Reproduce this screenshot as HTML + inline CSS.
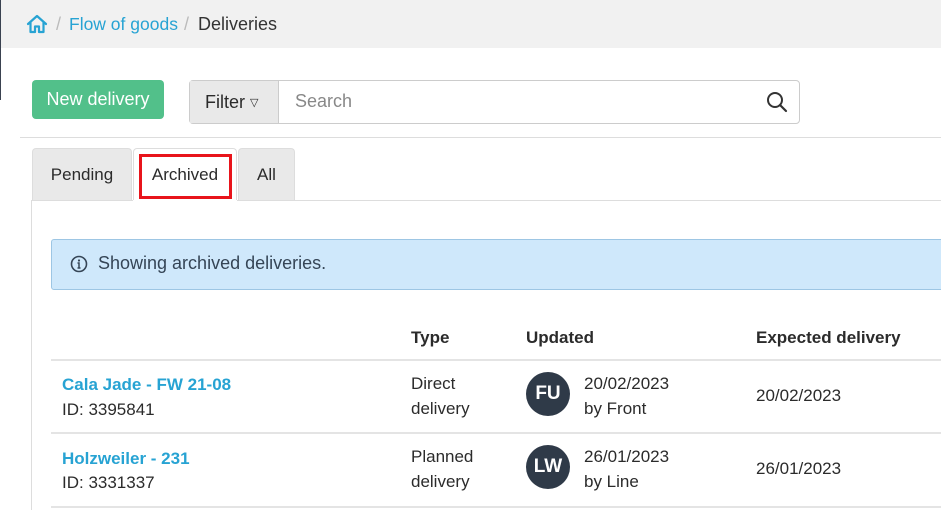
<!DOCTYPE html><html><head><style>
*{margin:0;padding:0;box-sizing:border-box}
body{width:941px;height:510px;overflow:hidden;background:#fff;font-family:"Liberation Sans",sans-serif;color:#2b2b2b;position:relative}
.a{position:absolute;white-space:nowrap}
.crumb{left:0;top:0;width:941px;height:48px;background:#f1f1f1}
.bl{color:#27a3d3}
.tab{position:absolute;top:148px;height:52px;background:#e9e9e9;border:1px solid #ddd;border-bottom:none;border-radius:4px 4px 0 0;font-size:17px;line-height:52px;text-align:center}
.av{position:absolute;width:44px;height:44px;border-radius:50%;background:#2f3a48;color:#fff;font-weight:bold;font-size:19px;line-height:44px;text-align:center}
.hl{position:absolute;left:51px;width:890px;height:2px;background:#e4e4e4}
.t{font-size:17px;line-height:25px}
</style></head><body>
<div class="a crumb"></div>
<div class="a" style="left:0;top:0;width:1px;height:100px;background:#3a4250"></div>
<svg class="a" style="left:26px;top:14px" width="22" height="20" viewBox="0 0 22 20"><path d="M2 10 L11 2 L20 10 M4.5 8 V18 H9 V12.5 H13 V18 H17.5 V8" fill="none" stroke="#27a3d3" stroke-width="2.2" stroke-linejoin="round" stroke-linecap="round"/></svg>
<div class="a" style="left:56px;top:14px;font-size:18px;color:#bbb">/</div>
<div class="a bl" style="left:69px;top:14px;font-size:17.5px">Flow of goods</div>
<div class="a" style="left:184px;top:14px;font-size:18px;color:#bbb">/</div>
<div class="a" style="left:198px;top:14px;font-size:18px;color:#333">Deliveries</div>
<div class="a" style="left:32px;top:80px;width:132px;height:39px;background:#52c08a;border-radius:4px;color:#fff;font-size:18px;line-height:39px;text-align:center">New delivery</div>
<div class="a" style="left:189px;top:80px;width:611px;height:44px;border:1px solid #ccc;border-radius:4px;background:#fff"></div>
<div class="a" style="left:190px;top:81px;width:89px;height:42px;background:#e9e9e9;border-right:1px solid #ccc;font-size:18px;line-height:42px;padding-left:15px">Filter <span style="font-size:11px;vertical-align:2px">▽</span></div>
<div class="a" style="left:295px;top:91px;font-size:18px;color:#888">Search</div>
<svg class="a" style="left:766px;top:91px" width="22" height="22" viewBox="0 0 22 22"><circle cx="9" cy="9" r="7" fill="none" stroke="#333" stroke-width="2"/><path d="M14 14 L20 20" stroke="#333" stroke-width="2.2" stroke-linecap="round"/></svg>
<div class="a" style="left:20px;top:137px;width:921px;height:1px;background:#ddd"></div>
<div class="tab" style="left:32px;width:100px">Pending</div>
<div class="tab" style="left:133px;width:104px;background:#fff;height:53px">Archived</div>
<div class="tab" style="left:238px;width:57px">All</div>
<div class="a" style="left:139px;top:154px;width:93px;height:45px;border:3px solid #e8141b"></div>
<div class="a" style="left:31px;top:200px;width:910px;height:1px;background:#ddd"></div>
<div class="a" style="left:133px;top:200px;width:104px;height:1px;background:#fff"></div>
<div class="a" style="left:31px;top:200px;width:1px;height:310px;background:#ddd"></div>
<div class="a" style="left:51px;top:239px;width:895px;height:51px;background:#cfe8fb;border:1px solid #9dc6e4;border-radius:3px"></div>
<svg class="a" style="left:70px;top:255px" width="18" height="18" viewBox="0 0 18 18"><circle cx="9" cy="9" r="7.5" fill="none" stroke="#354556" stroke-width="1.6"/><circle cx="9" cy="5.5" r="1.1" fill="#354556"/><path d="M7.5 8 H9 V13 M7.5 13 H10.5" stroke="#354556" stroke-width="1.5" fill="none"/></svg>
<div class="a" style="left:98px;top:253px;font-size:18px;color:#354556">Showing archived deliveries.</div>
<div class="a t" style="left:411px;top:325px;font-weight:bold">Type</div>
<div class="a t" style="left:526px;top:325px;font-weight:bold">Updated</div>
<div class="a t" style="left:756px;top:325px;font-weight:bold">Expected delivery</div>
<div class="hl" style="top:359px"></div>
<div class="hl" style="top:432px"></div>
<div class="hl" style="top:506px"></div>
<div class="a t bl" style="left:62px;top:372px;font-weight:bold">Cala Jade - FW 21-08</div>
<div class="a t" style="left:62px;top:397px">ID: 3395841</div>
<div class="a t" style="left:411px;top:371px">Direct<br>delivery</div>
<div class="av" style="left:526px;top:372px">FU</div>
<div class="a t" style="left:584px;top:371px">20/02/2023<br>by Front</div>
<div class="a t" style="left:756px;top:383px">20/02/2023</div>
<div class="a t bl" style="left:62px;top:446px;font-weight:bold">Holzweiler - 231</div>
<div class="a t" style="left:62px;top:470px">ID: 3331337</div>
<div class="a t" style="left:411px;top:444px">Planned<br>delivery</div>
<div class="av" style="left:526px;top:445px">LW</div>
<div class="a t" style="left:584px;top:444px">26/01/2023<br>by Line</div>
<div class="a t" style="left:756px;top:456px">26/01/2023</div>
</body></html>
